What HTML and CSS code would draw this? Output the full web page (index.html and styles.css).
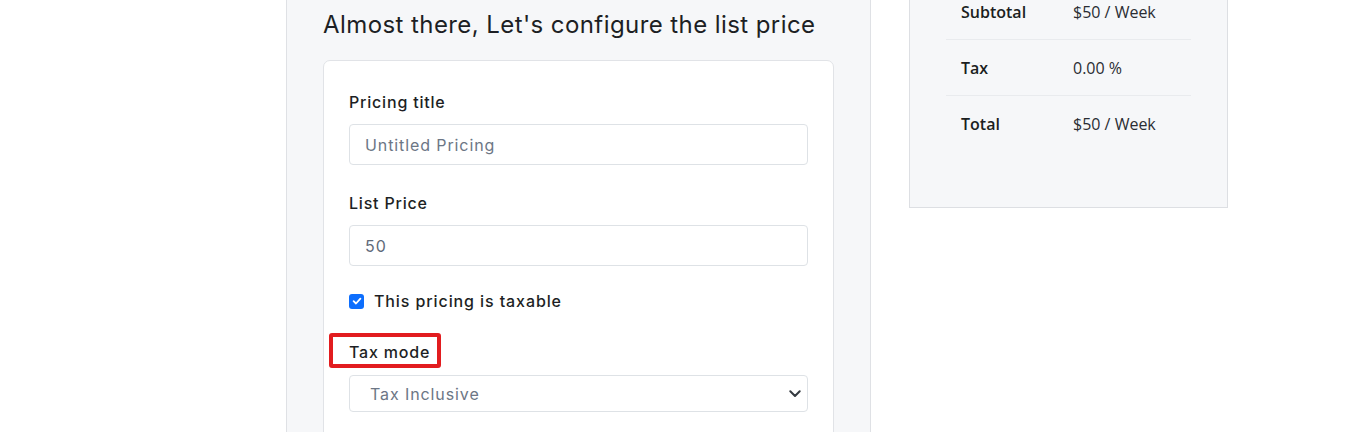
FILE: index.html
```html
<!DOCTYPE html>
<html lang="en">
<head>
<meta charset="utf-8">
<title>Configure list price</title>
<link rel="stylesheet" href="styles.css">
</head>
<body>
<div class="page">
  <section class="config">
    <h2 class="config-title">Almost there, Let's configure the list price</h2>
    <div class="card">
      <div class="field">
        <label class="field-label">Pricing title</label>
        <div class="input is-placeholder">Untitled Pricing</div>
      </div>
      <div class="field tight">
        <label class="field-label">List Price</label>
        <div class="input">50</div>
      </div>
      <div class="check-row">
        <span class="checkbox">
          <svg width="10" height="10" viewBox="0 0 10 10"><path d="M1.6 5.2 L4 7.5 L8.4 2.6" fill="none" stroke="#fff" stroke-width="1.8" stroke-linecap="round" stroke-linejoin="round"/></svg>
        </span>
        <span class="check-label">This pricing is taxable</span>
      </div>
      <div class="field">
        <label class="field-label highlighted">Tax mode<span class="highlight-box"></span></label>
        <div class="select">
          <span>Tax Inclusive</span>
          <svg class="chevron" width="12" height="8" viewBox="0 0 12 8"><path d="M1.3 1.3 L6 6 L10.7 1.3" fill="none" stroke="#343a40" stroke-width="2" stroke-linecap="round" stroke-linejoin="round"/></svg>
        </div>
      </div>
    </div>
  </section>
  <aside class="summary">
    <div class="summary-row"><span class="summary-label">Subtotal</span><span class="summary-value">$50 / Week</span></div>
    <div class="summary-row"><span class="summary-label">Tax</span><span class="summary-value">0.00 %</span></div>
    <div class="summary-row last"><span class="summary-label">Total</span><span class="summary-value">$50 / Week</span></div>
  </aside>
</div>
</body>
</html>
```

FILE: styles.css
```css
html, body {
  margin: 0;
  padding: 0;
  overflow: hidden;
  background: #ffffff;
}

body {
  height: 432px;
}

.page {
  display: flex;
  align-items: flex-start;
  gap: 38px;
  padding-left: 286px;
  margin-top: -30px;
}

.config {
  box-sizing: border-box;
  width: 585px;
  height: 600px;
  background: #f6f7f9;
  border: 1px solid #dfe1e5;
  padding: 39px 36px 0;
  font-family: "Inter", "Noto Sans", sans-serif;
  color: #1d1f24;
}

.config-title {
  margin: 0 0 21px;
  font-size: 24px;
  line-height: 29px;
  font-weight: 400;
  letter-spacing: 0.42px;
  color: #1d1f24;
}

.card {
  min-height: 520px;
  background: #ffffff;
  border: 1px solid #e1e3e7;
  border-radius: 7px;
  padding: 29px 25px 30px;
}

.field {
  display: flex;
  flex-direction: column;
  align-items: flex-start;
  margin-bottom: 26px;
}

.field.tight {
  margin-bottom: 23px;
}

.field-label {
  position: relative;
  display: inline-block;
  font-size: 16px;
  line-height: 24px;
  font-weight: 500;
  letter-spacing: 0.8px;
  margin-bottom: 10px;
}

.field-label.highlighted {
  margin-bottom: 11px;
}

.highlight-box {
  position: absolute;
  top: -7px;
  bottom: -4px;
  left: -20px;
  right: -11px;
  border: 4px solid #e21c1f;
  border-radius: 3px;
}

.input {
  box-sizing: border-box;
  align-self: stretch;
  height: 41px;
  border: 1px solid #dee2e6;
  border-radius: 4px;
  padding: 0 15px;
  display: flex;
  align-items: center;
  font-size: 16px;
  letter-spacing: 0.9px;
  color: #5f6b7a;
}

.input.is-placeholder {
  color: #6c7685;
}

.check-row {
  display: flex;
  align-items: center;
  gap: 10px;
  height: 24px;
  margin-bottom: 27px;
}

.checkbox {
  box-sizing: border-box;
  width: 15px;
  height: 15px;
  border-radius: 3px;
  background: #0d6efd;
  display: flex;
  align-items: center;
  justify-content: center;
}

.check-label {
  font-size: 16px;
  line-height: 24px;
  font-weight: 500;
  letter-spacing: 0.9px;
}

.select {
  box-sizing: border-box;
  align-self: stretch;
  height: 37px;
  border: 1px solid #dee2e6;
  border-radius: 4px;
  padding: 0 6px 0 20px;
  display: flex;
  align-items: center;
  justify-content: space-between;
  font-size: 16px;
  letter-spacing: 0.9px;
  color: #6c7685;
}

.summary {
  box-sizing: border-box;
  width: 319px;
  background: #f6f7f9;
  border: 1px solid #dddfe3;
  padding: 13px 36px 55px;
  font-family: "Open Sans", sans-serif;
  font-size: 16px;
  color: #212529;
}

.summary-row {
  box-sizing: border-box;
  height: 56px;
  display: grid;
  grid-template-columns: 112px 1fr;
  align-items: center;
  padding-left: 15px;
  border-bottom: 1px solid #e9ebee;
  line-height: 24px;
}

.summary-row.last {
  border-bottom: none;
}

.summary-label {
  font-weight: 600;
  color: #1b1e21;
}

.summary-value {
  color: #2a2d33;
}
```
